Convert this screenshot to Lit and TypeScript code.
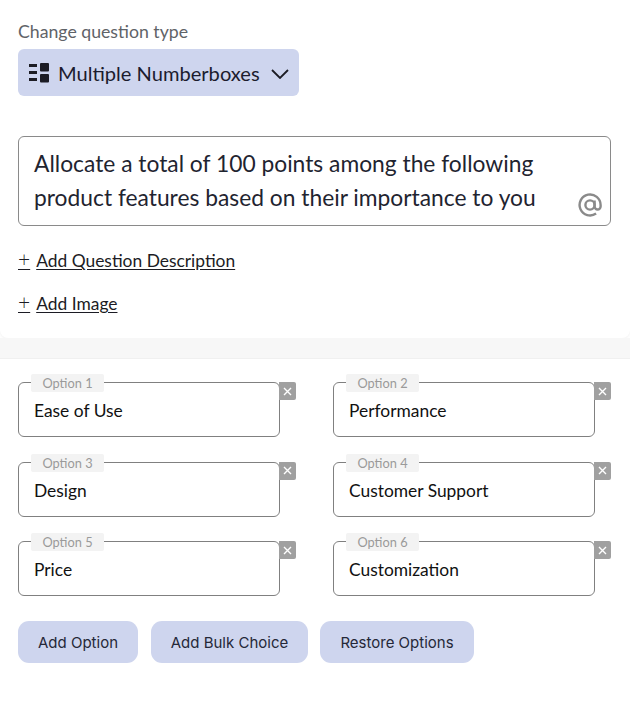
import { LitElement, html, css } from "lit";
import { customElement } from "lit/decorators.js";

const OPTIONS = ["Ease of Use", "Performance", "Design", "Customer Support", "Price", "Customization"];

@customElement("app-root")
export class AppRoot extends LitElement {
  static styles = css`
    :host { display: block; width: 630px; height: 705px; background: #fff; font-family: Lato, "Open Sans", sans-serif; color: #1c1c24; overflow: hidden; }
    .top { background: #fff; height: 338px; box-sizing: border-box; padding: 20px 19px 0 18px; border-radius: 0 0 8px 8px; box-shadow: 0 1px 3px rgba(0,0,0,.06); display: flex; flex-direction: column; align-items: flex-start; }
    .gap { height: 20px; background: #f7f7f7; }
    .label { font-size: 17.7px; line-height: 24px; color: #5f6368; height: 29px; }
    .select { width: 281px; height: 47px; box-sizing: border-box; background: #ced5ee; border-radius: 6px; display: flex; align-items: center; padding: 0 10px 0 11px; font-size: 20.1px; color: #1c1c2e; }
    .select .name { margin-left: 9px; flex: 1; white-space: nowrap; }
    .select .chev { margin-top: 3px; }
    .question { margin-top: 40px; width: 593px; height: 90px; box-sizing: border-box; border: 1px solid #8a8a8a; border-radius: 6px; padding: 9px 15px; font-size: 22.8px; line-height: 34px; position: relative; color: #1f2430; }
    .question svg { position: absolute; right: 8px; bottom: 8px; }
    .link { font-size: 17.4px; line-height: 24px; color: #1c1c24; text-decoration: underline; text-underline-offset: 2px; }
    .link .plus { font-size: 21px; font-weight: 300; line-height: 20px; margin-right: 6px; }
    .link.first { margin-top: 23px; }
    .link.second { margin-top: 19px; }
    .bottom { padding: 23px 18px 0; border-top: 1px solid #f0f0f0; }
    .grid { display: grid; grid-template-columns: 262px 262px; column-gap: 53px; row-gap: 24.5px; }
    .opt { position: relative; height: 55px; box-sizing: border-box; border: 1px solid #808080; border-radius: 6px; padding: 2px 15px 0; display: flex; align-items: center; font-size: 17.4px; color: #111; background: #fff; }
    .tag { position: absolute; left: 12px; top: -9px; width: 73px; height: 18px; background: #f3f3f3; border-radius: 2px; color: #9a9a9a; font-size: 12.8px; line-height: 18px; text-align: center; }
    .x { position: absolute; left: 260px; top: -1px; width: 17px; height: 18px; background: #a0a0a0; border-radius: 0 2px 2px 0; display: flex; align-items: center; justify-content: center; }
    .actions { display: flex; margin-top: 25px; }
    .btn { height: 42px; border-radius: 11px; background: #ced5ee; font-family: Inter, sans-serif; font-size: 15px; color: #252838; display: flex; align-items: center; justify-content: center; box-sizing: border-box; white-space: nowrap; }
    .b1 { width: 120px; margin-right: 13px; }
    .b2 { width: 157px; margin-right: 12px; }
    .b3 { width: 154px; }
  `;

  render() {
    return html`
      <div class="top">
        <div class="label">Change question type</div>
        <div class="select">
          <svg width="20" height="20" viewBox="0 0 20 20" fill="#1c1c24">
            <rect x="0" y="1" width="8" height="3" /><rect x="0" y="8" width="8" height="3" /><rect x="0" y="15" width="8" height="3" />
            <rect x="11" y="0" width="9" height="8.5" rx="1" /><rect x="11" y="11" width="9" height="8.5" rx="1" />
          </svg>
          <span class="name">Multiple Numberboxes</span>
          <svg class="chev" width="18" height="10" viewBox="0 0 18 10" fill="none" stroke="#1c1c24" stroke-width="1.8"><path d="M1 1 L9 9 L17 1" /></svg>
        </div>
        <div class="question">
          Allocate a total of 100 points among the following product features based on their importance to you
          <svg width="24" height="24" viewBox="0 0 24 24" fill="none" stroke="#8a8a8a" stroke-width="2.4">
            <circle cx="12" cy="12" r="4.6" />
            <path d="M16.6 7.5 V13.5 a3 3 0 0 0 6 0 V12 a10.5 10.5 0 1 0 -4.5 8.6" />
          </svg>
        </div>
        <div class="link first"><span class="plus">+</span>Add Question Description</div>
        <div class="link second"><span class="plus">+</span>Add Image</div>
      </div>
      <div class="gap"></div>
      <div class="bottom">
        <div class="grid">
          ${OPTIONS.map((o, i) => html`
            <div class="opt">
              <span class="tag">Option ${i + 1}</span>
              ${o}
              <span class="x"><svg width="9" height="9" viewBox="0 0 9 9" stroke="#fff" stroke-width="1.4"><path d="M1 1 L8 8 M8 1 L1 8" /></svg></span>
            </div>`)}
        </div>
        <div class="actions">
          <div class="btn b1">Add Option</div>
          <div class="btn b2">Add Bulk Choice</div>
          <div class="btn b3">Restore Options</div>
        </div>
      </div>
    `;
  }
}
